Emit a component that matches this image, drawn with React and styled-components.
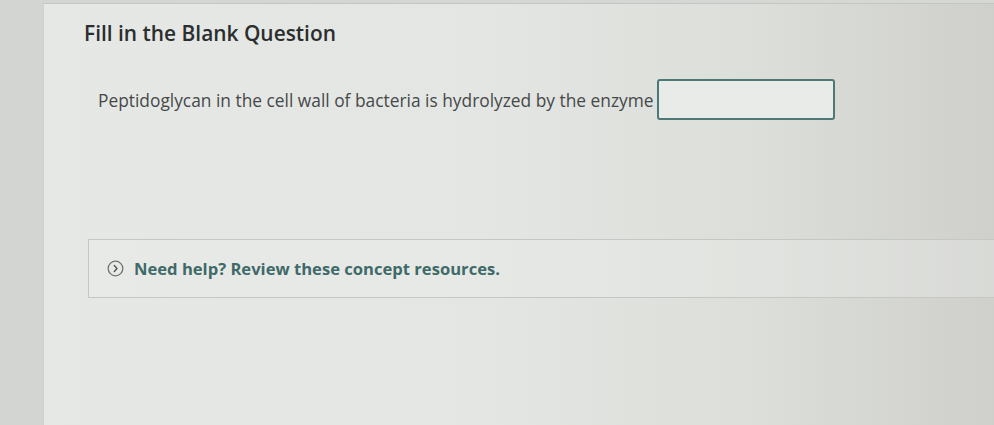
import React from 'react';
import styled, { createGlobalStyle } from 'styled-components';

const GlobalStyle = createGlobalStyle`
  html, body {
    margin: 0;
    padding: 0;
    background: #d3d6d3;
    font-family: "Open Sans", Lato, sans-serif;
  }
`;

const Page = styled.div`
  display: flex;
  width: 994px;
  height: 425px;
  overflow: hidden;
  background: linear-gradient(90deg, #d2d5d2 0%, #d6d8d5 100%);
`;

const Gutter = styled.div`
  width: 43px;
  flex-shrink: 0;
`;

const Panel = styled.main`
  flex: 1;
  margin-top: 3px;
  border-top: 1px solid #c3c6c3;
  border-left: 1px solid #cfd1cf;
  background: linear-gradient(90deg, #e6e8e6 0%, #e4e6e3 45%, #dcdeda 75%, #cfd0cc 100%);
  padding: 15px 0 0 40px;
`;

const Title = styled.h2`
  margin: 0;
  font-size: 20.9px;
  line-height: 28px;
  font-weight: 600;
  color: #2b2e2e;
`;

const Question = styled.div`
  display: flex;
  align-items: center;
  margin: 32px 0 0 14px;
  font-size: 17.35px;
  color: #464949;
`;

const Blank = styled.div`
  width: 174px;
  height: 37px;
  margin-left: 3px;
  border: 2px solid #4d7876;
  border-radius: 3px;
  background: #e9ebe9;
`;

const Help = styled.div`
  display: flex;
  align-items: center;
  gap: 10px;
  margin: 119px 0 0 4px;
  height: 57px;
  padding-left: 18px;
  border: 1px solid #c4c7c4;
  border-right: none;
  background: rgba(236, 238, 236, 0.35);
`;

const HelpText = styled.span`
  font-size: 16.6px;
  font-weight: 700;
  color: #3f6a69;
`;

function ChevronCircle() {
  return (
    <svg width="17" height="17" viewBox="0 0 17 17" fill="none">
      <circle cx="8.5" cy="8.5" r="7.3" stroke="#6f7372" strokeWidth="1.3" />
      <path d="M7.3 5.6 L10 8.5 L7.3 11.4" stroke="#4f5453" strokeWidth="1.4" strokeLinecap="round" strokeLinejoin="round" />
    </svg>
  );
}

export default function App() {
  return (
    <>
      <GlobalStyle />
      <Page>
        <Gutter />
        <Panel>
          <Title>Fill in the Blank Question</Title>
          <Question>
            Peptidoglycan in the cell wall of bacteria is hydrolyzed by the enzyme
            <Blank />
          </Question>
          <Help>
            <ChevronCircle />
            <HelpText>Need help? Review these concept resources.</HelpText>
          </Help>
        </Panel>
      </Page>
    </>
  );
}
